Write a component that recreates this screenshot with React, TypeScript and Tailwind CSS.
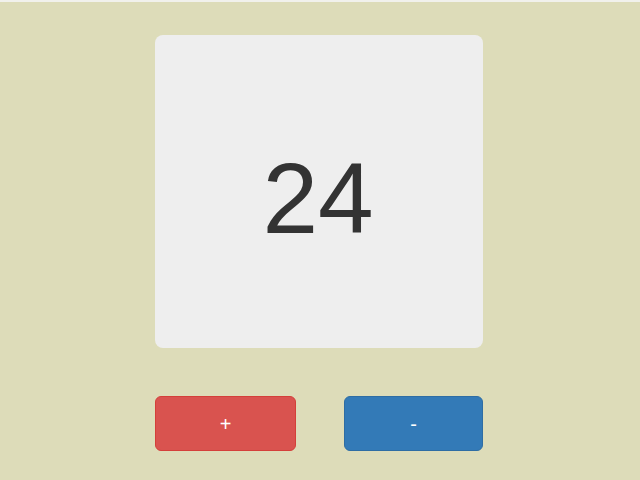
import { useState } from 'react';

export default function App() {
  const [count, setCount] = useState(24);

  return (
    <div className="min-h-screen bg-[#dddcb9] border-t-2 border-[#f1f1ec] font-['Liberation_Sans',Arial,sans-serif]">
      <div className="w-[330px] pr-[2px] mx-auto pt-[33px]">
        {/* Counter display */}
        <div className="h-[313px] rounded-lg bg-[#eeeeee] flex items-center justify-center">
          <span className="text-[100px] leading-none text-[#333333] pt-[12px] pr-[2px]">{count}</span>
        </div>

        {/* Controls */}
        <div className="mt-[48px] flex justify-between">
          <button
            className="w-[141px] h-[55px] rounded-md bg-[#d9534f] border border-[#d43f3a] text-white text-[20px] leading-none"
            onClick={() => setCount((c) => c + 1)}
          >
            +
          </button>
          <button
            className="w-[139px] h-[55px] rounded-md bg-[#337ab7] border border-[#2e6da4] text-white text-[20px] leading-none"
            onClick={() => setCount((c) => c - 1)}
          >
            -
          </button>
        </div>
      </div>
    </div>
  );
}
